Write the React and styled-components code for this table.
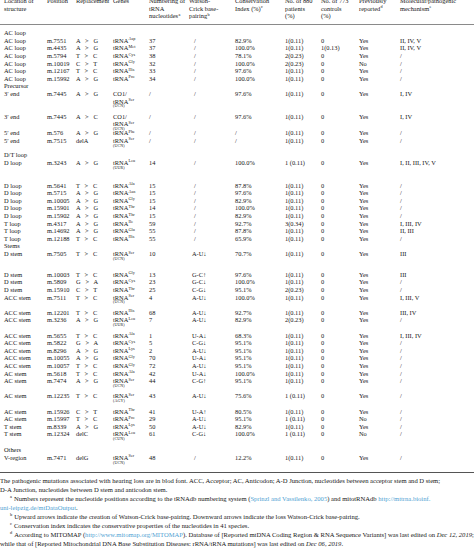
import React from 'react';
import styled, { createGlobalStyle } from 'styled-components';

const UNIT = 7.6;
const COLS = '43px 29px 37px 36px 40px 46px 50px 36px 38px 41px 1fr';

const Global = createGlobalStyle`
html, body {
    margin:0;
    padding:0;
    background:#fff;
}
body {
    font-family:"Liberation Serif", "Times New Roman", serif;
    color:#151515;
}
`;

const Page = styled.div`
width:474px;
height:550px;
overflow:hidden;
`;

const Table = styled.div`
margin-top:-3px;
font-size:6.4px;
`;

const Head = styled.div`
display:grid;
grid-template-columns:${COLS};
padding:0 0 4.5px 4px;
border-bottom:1px solid #8a8a8a;
line-height:${UNIT}px;
white-space:nowrap;
`;

const Body = styled.div`
padding:4px 0 2.5px;
border-bottom:1.5px solid #555;
`;

const Row = styled.div`
display:grid;
grid-template-columns:${COLS};
padding-left:4px;
height:${p => (p.$lines || 1) * UNIT}px;
line-height:${UNIT}px;
white-space:nowrap;
`;

const Section = styled.div`
height:${UNIT}px;
line-height:${UNIT}px;
padding-left:4px;
`;

const Cell = styled.div`
padding-left:${p => p.$indent || 0}px;
`;

const Replace = styled.span`
word-spacing:3.2px;
`;

const Sup = styled.sup`
font-size:4.2px;
line-height:0;
vertical-align:2.4px;
margin-left:0.3px;
`;

const Sub = styled.div`
font-size:4px;
line-height:4px;
margin-top:-0.8px;
letter-spacing:0.1px;
`;

const Notes = styled.div`
margin-top:3.5px;
font-size:6.6px;
line-height:9px;
`;

const Note = styled.div`
white-space:nowrap;
padding-left:${p => p.$indent || 0}px;
`;

const Link = styled.span`
color:#4f9fd3;
`;

const NoteMark = styled.sup`
font-size:4.4px;
line-height:0;
vertical-align:2.6px;
margin-right:2px;
`;

const g = (aa, sub, pre) => ({ aa, sub, pre });

const rows = [
    { sec: 'AC loop' },
    { c: ['AC loop', 'm.7551', 'A > G', g('Asp'), '37', '/', '82.9%', '1(0.11)', '0', 'Yes', 'II, IV, V'] },
    { c: ['AC loop', 'm.4435', 'A > G', g('Met'), '37', '/', '100.0%', '1(0.11)', '1(0.13)', 'Yes', 'II, IV, V'] },
    { c: ['AC loop', 'm.5794', 'T > C', g('Cys'), '38', '/', '78.1%', '2(0.23)', '0', 'Yes', '/'] },
    { c: ['AC loop', 'm.10019', 'C > T', g('Gly'), '32', '/', '100.0%', '2(0.23)', '0', 'No', '/'] },
    { c: ['AC loop', 'm.12167', 'T > C', g('His'), '33', '/', '97.6%', '1(0.11)', '0', 'Yes', '/'] },
    { c: ['AC loop', 'm.15992', 'A > G', g('Pro'), '34', '/', '100.0%', '1(0.11)', '0', 'Yes', '/'] },
    { sec: 'Precursor' },
    { lines: 3, c: ["3′ end", 'm.7445', 'A > G', g('Ser', '(UCN)', 'CO1/'), '/', '/', '97.6%', '1(0.11)', '0', 'Yes', 'I, IV'] },
    { lines: 2.15, c: ["3′ end", 'm.7445', 'A > C', g('Ser', '(UCN)', 'CO1/'), '/', '/', '97.6%', '1(0.11)', '0', 'Yes', 'I, IV'] },
    { c: ["5′ end", 'm.576', 'A > G', g('Phe'), '/', '/', '/', '1(0.11)', '0', 'Yes', '/'] },
    { lines: 1.9, c: ["5′ end", 'm.7515', 'delA', g('Ser', '(UCN)'), '/', '/', '/', '1(0.11)', '0', 'Yes', '/'] },
    { sec: 'D/T loop' },
    { lines: 3, c: ['D loop', 'm.3243', 'A > G', g('Leu', '(UUR)'), '14', '/', '100.0%', '1 (0.11)', '0', 'Yes', 'I, II, III, IV, V'] },
    { c: ['D loop', 'm.5641', 'T > C', g('Ala'), '15', '/', '87.8%', '1(0.11)', '0', 'Yes', '/'] },
    { c: ['D loop', 'm.5715', 'A > G', g('Asn'), '15', '/', '97.6%', '1(0.11)', '0', 'Yes', '/'] },
    { c: ['D loop', 'm.10005', 'A > G', g('Gly'), '15', '/', '82.9%', '1(0.11)', '0', 'Yes', '/'] },
    { c: ['D loop', 'm.15901', 'A > G', g('Thr'), '14', '/', '100.0%', '1(0.11)', '0', 'Yes', '/'] },
    { c: ['D loop', 'm.15902', 'A > G', g('Thr'), '15', '/', '82.9%', '1(0.11)', '0', 'Yes', '/'] },
    { c: ['T loop', 'm.4317', 'A > G', g('Ile'), '59', '/', '92.7%', '3(0.34)', '0', 'Yes', 'I, III, IV'] },
    { c: ['T loop', 'm.14692', 'A > G', g('Glu'), '55', '/', '87.8%', '1(0.11)', '0', 'Yes', 'II, III'] },
    { c: ['T loop', 'm.12188', 'T > C', g('His'), '55', '/', '65.9%', '1(0.11)', '0', 'Yes', '/'] },
    { sec: 'Stems' },
    { lines: 2.75, c: ['D stem', 'm.7505', 'T > C', g('Ser', '(UCN)'), '10', 'A-U↓', '70.7%', '1(0.11)', '0', 'Yes', 'III'] },
    { c: ['D stem', 'm.10003', 'T > C', g('Gly'), '13', 'G-C↑', '97.6%', '1(0.11)', '0', 'Yes', 'III'] },
    { c: ['D stem', 'm.5809', 'G > A', g('Cys'), '23', 'G-C↓', '100.0%', '1(0.11)', '0', 'Yes', '/'] },
    { c: ['D stem', 'm.15910', 'C > T', g('Thr'), '25', 'C-G↓', '95.1%', '2(0.23)', '0', 'Yes', '/'] },
    { lines: 2, c: ['ACC stem', 'm.7511', 'T > C', g('Ser', '(UCN)'), '4', 'A-U↓', '100.0%', '1(0.11)', '0', 'Yes', 'I, III, V'] },
    { c: ['ACC stem', 'm.12201', 'T > C', g('His'), '68', 'A-U↓', '92.7%', '1(0.11)', '0', 'Yes', 'III, IV'] },
    { lines: 2, c: ['ACC stem', 'm.3236', 'A > G', g('Leu', '(UUR)'), '7', 'A-U↓', '82.9%', '2(0.23)', '0', 'Yes', '/'] },
    { c: ['ACC stem', 'm.5655', 'T > C', g('Ala'), '1', 'U-A↓', '68.3%', '1(0.11)', '0', 'Yes', 'I, III, IV'] },
    { c: ['ACC stem', 'm.5822', 'G > A', g('Cys'), '5', 'C-G↓', '95.1%', '1(0.11)', '0', 'Yes', '/'] },
    { c: ['ACC stem', 'm.8296', 'A > G', g('Lys'), '2', 'A-U↓', '95.1%', '1(0.11)', '0', 'Yes', '/'] },
    { c: ['ACC stem', 'm.10055', 'A > G', g('Gly'), '70', 'U-A↓', '95.1%', '1(0.11)', '0', 'Yes', '/'] },
    { c: ['ACC stem', 'm.10057', 'T > C', g('Gly'), '72', 'A-U↓', '95.1%', '1(0.11)', '0', 'Yes', '/'] },
    { c: ['AC stem', 'm.5618', 'T > C', g('Ala'), '42', 'U-A↓', '100.0%', '1(0.11)', '0', 'Yes', '/'] },
    { lines: 2, c: ['AC stem', 'm.7474', 'A > G', g('Ser', '(UCN)'), '44', 'C-G↑', '95.1%', '1(0.11)', '0', 'Yes', '/'] },
    { lines: 2, c: ['AC stem', 'm.12235', 'T > C', g('Ser', '(AGY)'), '43', 'A-U↓', '75.6%', '1 (0.11)', '0', 'Yes', '/'] },
    { c: ['AC stem', 'm.15926', 'C > T', g('Thr'), '41', 'U-A↑', '80.5%', '1(0.11)', '0', 'Yes', '/'] },
    { c: ['AC stem', 'm.15997', 'T > C', g('Pro'), '29', 'A-U↓', '95.1%', '1 (0.11)', '0', 'No', '/'] },
    { c: ['T stem', 'm.8339', 'A > G', g('Lys'), '50', 'A-U↓', '82.9%', '1(0.11)', '0', 'Yes', '/'] },
    { lines: 2.1, c: ['T stem', 'm.12324', 'delC', g('Leu', '(CUN)'), '61', 'C-G↓', '100.0%', '1 (0.11)', '0', 'No', '/'] },
    { sec: 'Others' },
    { lines: 2, c: ['V-region', 'm.7471', 'delG', g('Ser', '(UCN)'), '48', '/', '12.2%', '1(0.11)', '0', 'Yes', '/'] },
];

const header = [
    ['Location of', 'structure'],
    ['Position'],
    ['Replacement'],
    ['Genes'],
    ['Numbering of', 'tRNA', ['nucleotides', 'a']],
    ['Watson-', 'Crick base-', ['pairing', 'b']],
    ['Conservation', ['Index (%)', 'c']],
    ['No. of 880', 'patients', '(%)'],
    ['No. of 773', 'controls', '(%)'],
    ['Previously', ['reported', 'd']],
    ['Molecular/pathogenic', ['mechanism', 'e']],
];

function Gene({ gene }) {
    return <Cell>
        {gene.pre && <div>{gene.pre}</div>}
        <div>tRNA<Sup>{gene.aa}</Sup></div>
        {gene.sub && <Sub>{gene.sub}</Sub>}
    </Cell>;
}

function DataRow({ row }) {
    const c = row.c;
    return <Row $lines={row.lines}>
        <Cell>{c[0]}</Cell>
        <Cell>{c[1]}</Cell>
        <Cell><Replace>{c[2]}</Replace></Cell>
        <Gene gene={c[3]} />
        <Cell>{c[4]}</Cell>
        <Cell $indent={c[5] === '/' ? 5 : 3}>{c[5]}</Cell>
        {c.slice(6).map((v, i) => <Cell key={i}>{v}</Cell>)}
    </Row>;
}

export default function App() {
    return <Page>
        <Global />
        <Table>
            <Head>
                {header.map((lines, i) => <Cell key={i}>
                    {lines.map((l, j) => Array.isArray(l)
                        ? <div key={j}>{l[0]}<Sup>{l[1]}</Sup></div>
                        : <div key={j}>{l}</div>)}
                </Cell>)}
            </Head>
            <Body>
                {rows.map((r, i) => r.sec
                    ? <Section key={i}>{r.sec}</Section>
                    : <DataRow key={i} row={r} />)}
            </Body>
        </Table>
        <Notes>
            <Note>The pathogenic mutations associated with hearing loss are in blod font. ACC, Acceptor; AC, Anticodon; A-D Junction, nucleotides between acceptor stem and D stem;</Note>
            <Note>D-A Junction, nucleotides between D stem and anticodon stem.</Note>
            <Note $indent={10}><NoteMark>a</NoteMark>Numbers represent the nucleotide positions according to the tRNAdb numbering system (<Link>Sprinzl and Vassilenko, 2005</Link>) and mitotRNAdb <Link>http://mttrna.bioinf.</Link></Note>
            <Note><Link>uni-leipzig.de/mtDataOutput</Link>.</Note>
            <Note $indent={10}><NoteMark>b</NoteMark>Upward arrows indicate the creation of Watson-Crick base-pairing. Downward arrows indicate the loss Watson-Crick base-pairing.</Note>
            <Note $indent={10}><NoteMark>c</NoteMark>Conservation index indicates the conservative properties of the nucleotides in 41 species.</Note>
            <Note $indent={10}><NoteMark>d</NoteMark>According to MITOMAP (<Link>http://www.mitomap.org/MITOMAP</Link>). Database of [Reported mtDNA Coding Region &amp; RNA Sequence Variants] was last edited on <i>Dec 12, 2019</i>;</Note>
            <Note>while that of [Reported Mitochondrial DNA Base Substitution Diseases: rRNA/tRNA mutations] was last edited on <i>Dec 06, 2019</i>.</Note>
        </Notes>
    </Page>;
}
